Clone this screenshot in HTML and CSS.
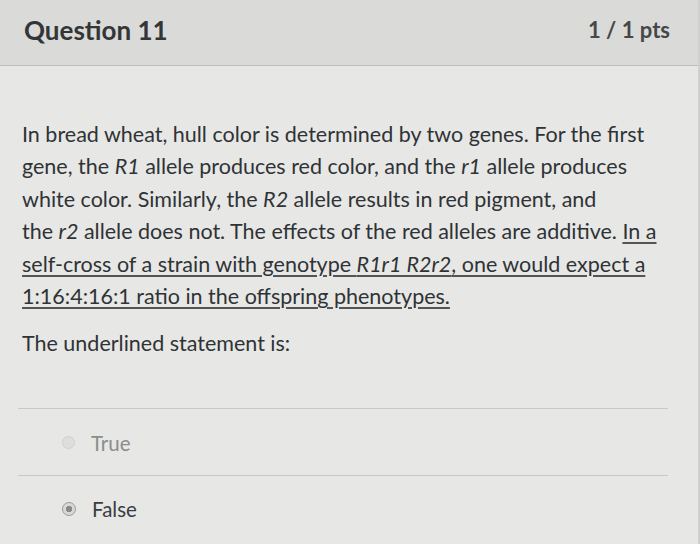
FILE: index.html
```html
<!DOCTYPE html>
<html>
<head>
<meta charset="utf-8">
<link rel="stylesheet" href="styles.css">
</head>
<body>
<div class="quiz">
  <div class="header">
    <div class="title">Question 11</div>
    <div class="pts">1 / 1 pts</div>
  </div>
  <div class="body">
    <p class="stem">In bread wheat, hull color is determined by two genes. For the first<br>gene, the <i>R1</i> allele produces red color, and the <i>r1</i> allele produces<br>white color. Similarly, the <i>R2</i> allele results in red pigment, and<br>the <i>r2</i> allele does not. The effects of the red alleles are additive. <u>In a<br>self-cross of a strain with genotype <i>R1r1 R2r2</i>, one would expect a<br>1:16:4:16:1 ratio in the offspring phenotypes.</u></p>
    <p class="prompt">The underlined statement is:</p>
    <div class="answers">
      <div class="answer muted"><span class="radio"></span><span>True</span></div>
      <div class="answer"><span class="radio checked"></span><span>False</span></div>
    </div>
  </div>
</div>
</body>
</html>
```
FILE: styles.css
```css
html, body {
  margin: 0;
  padding: 0;
}
body {
  width: 700px;
  height: 544px;
  overflow: hidden;
  background: #e7e7e5;
  font-family: Lato, "Open Sans", sans-serif;
  color: #2f3336;
}
.quiz {
  border-right: 2px solid #d0d0ce;
  height: 544px;
  box-sizing: border-box;
}
.header {
  height: 66px;
  box-sizing: border-box;
  background: #dadad8;
  border-bottom: 1px solid #bdbdbb;
  display: flex;
  align-items: center;
  justify-content: space-between;
  padding: 0 28px 0 24px;
}
.title {
  font-size: 26px;
  font-weight: 700;
  color: #333537;
  margin-top: -6px;
}
.pts {
  font-size: 22px;
  font-weight: 700;
  color: #45484a;
  margin-top: -6px;
}
.body {
  padding: 52px 0 0 22px;
}
.stem {
  margin: 0;
  font-size: 21.5px;
  line-height: 32.4px;
  white-space: nowrap;
}
.stem u {
  text-underline-offset: 3px;
  text-decoration-thickness: 1.5px;
  text-decoration-color: #555;
}
.prompt {
  margin: 15px 0 0 0;
  font-size: 21.5px;
  line-height: 32px;
}
.answers {
  margin-top: 50px;
  margin-left: -4px;
  width: 650px;
}
.answer {
  border-top: 1px solid #c9c9c7;
  height: 66px;
  display: flex;
  align-items: center;
  gap: 16px;
  padding-left: 44px;
  font-size: 20.5px;
  color: #3a3d3f;
  margin-top: -1px;
}
.answer.muted {
  color: #8a8d8f;
  height: 67px;
}
.radio {
  width: 13px;
  height: 13px;
  border-radius: 50%;
  border: 1px solid #cfcfcd;
  background: #dedede;
  box-sizing: border-box;
}
.radio.checked {
  border: 1px solid #9a9a98;
  background: radial-gradient(circle, #8a8a88 0 3px, #d8d8d6 3.5px);
  width: 14px;
  height: 14px;
}
```
